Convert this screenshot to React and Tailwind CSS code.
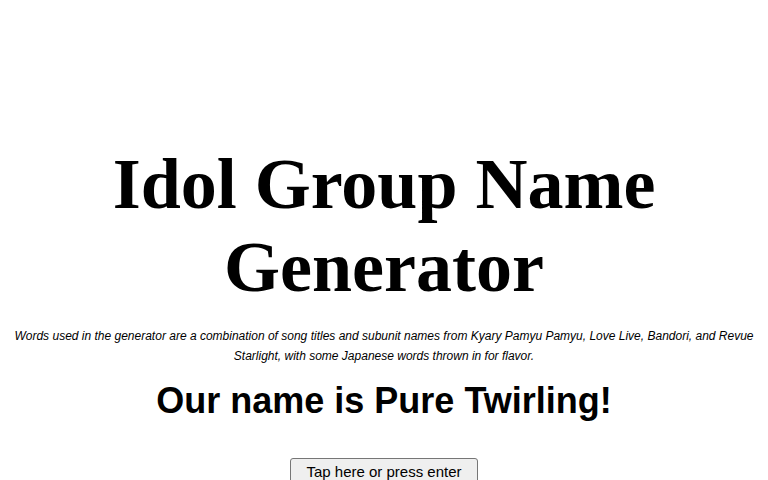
import React, { useState, useEffect, useCallback } from 'react';

const WORDS_A = ['Pure', 'Starry', 'Candy', 'Sunshine', 'Moonlight', 'Kira Kira'];
const WORDS_B = ['Twirling!', 'Dreamers!', 'Ribbon!', 'Parade!', 'Harmony!'];

const pick = (list) => list[Math.floor(Math.random() * list.length)];

export default function App() {
  const [name, setName] = useState('Pure Twirling!');

  const regenerate = useCallback(() => {
    setName(`${pick(WORDS_A)} ${pick(WORDS_B)}`);
  }, []);

  useEffect(() => {
    const onKey = (e) => {
      if (e.key === 'Enter') regenerate();
    };
    window.addEventListener('keydown', onKey);
    return () => window.removeEventListener('keydown', onKey);
  }, [regenerate]);

  return (
    <div className="min-h-screen bg-white text-black flex flex-col items-center text-center pt-[143px] px-2">
      <h1 className="font-['Liberation_Serif',serif] font-bold text-[72px] leading-[1.15]">
        Idol Group Name
        <br />
        Generator
      </h1>

      <p className="mt-[17px] font-['Liberation_Sans',Arial,sans-serif] italic text-[12px] leading-5">
        Words used in the generator are a combination of song titles and subunit names from Kyary Pamyu Pamyu, Love Live, Bandori, and Revue Starlight, with some Japanese words thrown in for flavor.
      </p>

      <h2 className="mt-[14px] font-['Liberation_Sans',Arial,sans-serif] font-bold text-[36px] leading-[1.15]">
        Our name is {name}
      </h2>

      <button
        onClick={regenerate}
        className="mt-[37px] font-['Liberation_Sans',Arial,sans-serif] text-[15px] leading-[20px] text-black bg-[#efefef] border border-[#767676] rounded-[3px] px-[15px] pt-[3px] pb-[3px]"
      >
        Tap here or press enter
      </button>
    </div>
  );
}
